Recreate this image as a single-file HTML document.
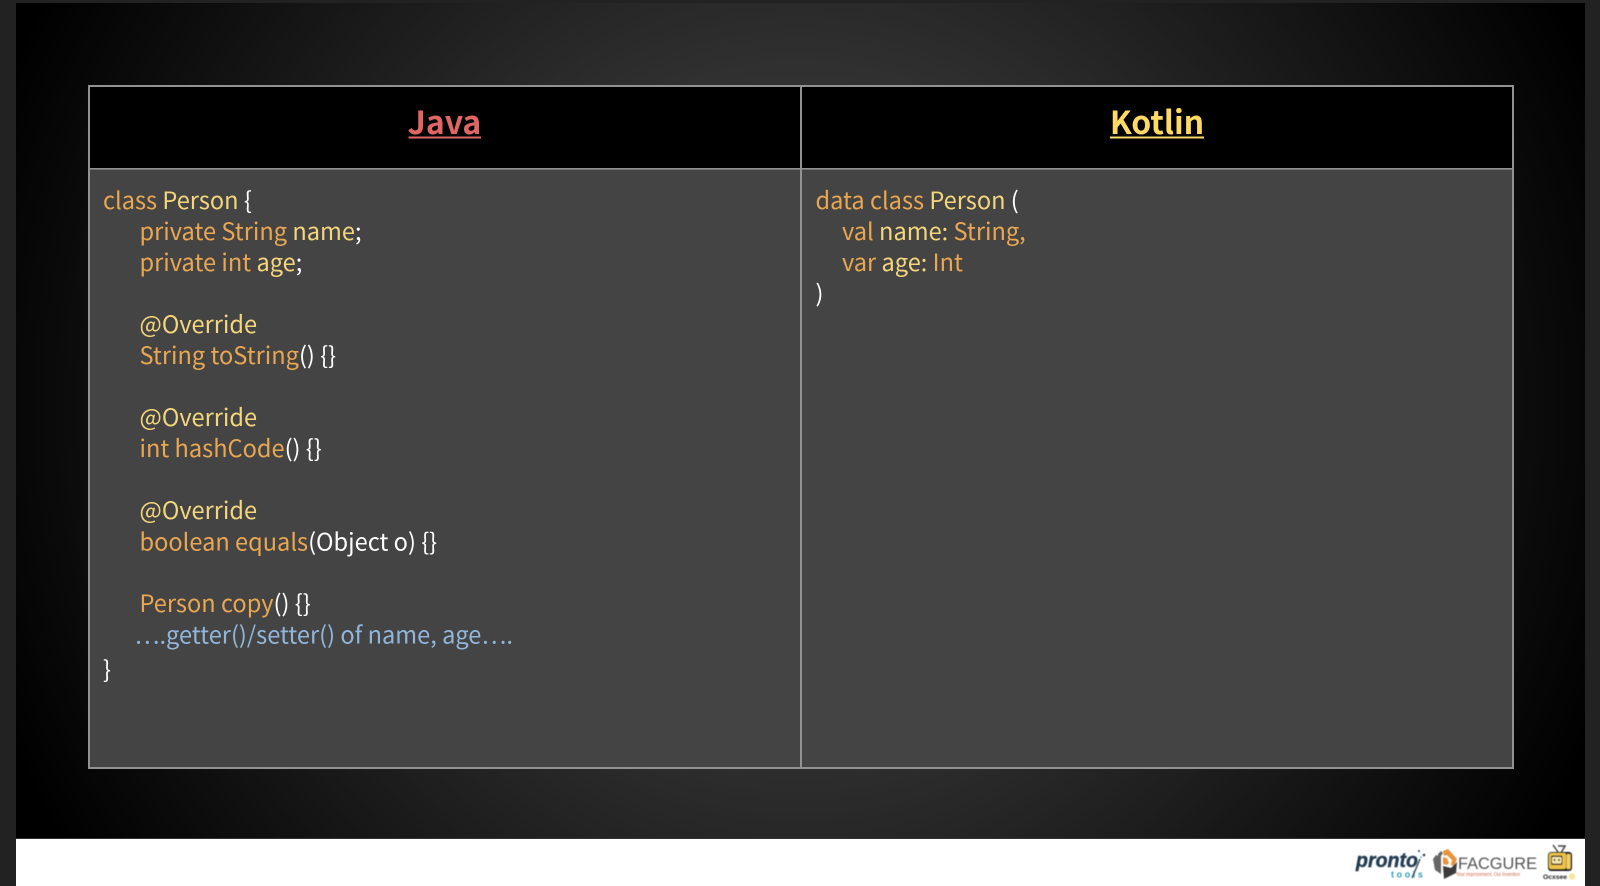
<!DOCTYPE html>
<html><head><meta charset="utf-8"><title>Java vs Kotlin</title>
<style>
html,body{margin:0;padding:0;background:#222;width:1600px;height:886px;overflow:hidden}
svg{display:block;position:absolute;left:0;top:0}
.c{font-family:"Noto Sans CJK JP","Liberation Sans",sans-serif;font-size:23.6px;fill:#fff}
.h{font-family:"Noto Sans CJK JP","Liberation Sans",sans-serif;font-size:32px;font-weight:700;text-anchor:middle}
.o{fill:#eaa752}.y{fill:#f4d67c}.w{fill:#fff}.b{fill:#92b6da}
</style></head><body>
<svg width="1600" height="886" viewBox="0 0 1600 886" xmlns="http://www.w3.org/2000/svg">
<defs>
<radialGradient id="bg" gradientUnits="userSpaceOnUse" cx="800" cy="405" r="860">
<stop offset="0" stop-color="#4f4f4f"/><stop offset="1" stop-color="#000"/>
</radialGradient>
<filter id="s" x="-5%" y="-5%" width="110%" height="110%"><feGaussianBlur stdDeviation="0.4"/></filter>
</defs>
<rect width="1600" height="886" fill="#222"/>
<rect x="16" y="3" width="1569" height="836" fill="url(#bg)"/>
<rect x="16" y="839" width="1569" height="47" fill="#fff"/>
<rect x="16" y="838" width="1569" height="1" fill="#333"/>

<rect x="89" y="86" width="1424" height="82" fill="#000"/>
<rect x="89" y="169" width="1424" height="599" fill="#444"/>
<g fill="#929292">
<rect x="88" y="85" width="1426" height="2"/>
<rect x="88" y="168" width="1426" height="1.6"/>
<rect x="88" y="767" width="1426" height="2"/>
<rect x="88" y="85" width="2" height="684"/>
<rect x="800" y="85" width="2" height="684"/>
<rect x="1512" y="85" width="2" height="684"/>
</g>

<text class="h" x="444.5" y="134" fill="#e06666">Java</text>
<rect x="408.5" y="136.5" width="72.5" height="2" fill="#e06666"/>
<text class="h" x="1157" y="134" fill="#ffd966">Kotlin</text>
<rect x="1110" y="136.5" width="94" height="2" fill="#ffd966"/>

<text class="c" x="103" y="209" xml:space="preserve"><tspan class="o">class </tspan><tspan class="y">Person </tspan><tspan class="w">{</tspan></text>
<text class="c" x="139.5" y="240" xml:space="preserve"><tspan class="o">private String </tspan><tspan class="y">name</tspan><tspan class="w">;</tspan></text>
<text class="c" x="139.5" y="271" xml:space="preserve"><tspan class="o">private int </tspan><tspan class="y">age</tspan><tspan class="w">;</tspan></text>
<text class="c y" x="139.5" y="333">@Override</text>
<text class="c" x="139.5" y="364" xml:space="preserve"><tspan class="o">String toString</tspan><tspan class="w">() {}</tspan></text>
<text class="c y" x="139.5" y="426">@Override</text>
<text class="c" x="139.5" y="457" xml:space="preserve"><tspan class="o">int hashCode</tspan><tspan class="w">() {}</tspan></text>
<text class="c y" x="139.5" y="519">@Override</text>
<text class="c" x="139.5" y="550.5" xml:space="preserve"><tspan class="o">boolean equals</tspan><tspan class="w">(Object o) {}</tspan></text>
<text class="c" x="139.5" y="612" xml:space="preserve"><tspan class="o">Person copy</tspan><tspan class="w">() {}</tspan></text>
<text class="c b" x="134.5" y="643.5">….getter()/setter() of name, age….</text>
<text class="c w" x="103" y="678">}</text>

<text class="c" x="815.5" y="209" xml:space="preserve"><tspan class="o">data class </tspan><tspan class="y">Person </tspan><tspan class="w">(</tspan></text>
<text class="c" x="842" y="240" xml:space="preserve"><tspan class="o">val </tspan><tspan class="y">name: </tspan><tspan class="o">String,</tspan></text>
<text class="c" x="842" y="271" xml:space="preserve"><tspan class="o">var </tspan><tspan class="y">age: </tspan><tspan class="o">Int</tspan></text>
<text class="c w" x="815.5" y="302">)</text>

<g filter="url(#s)">
<text x="1356" y="867" font-family="Liberation Sans, sans-serif" font-size="20" font-weight="700" font-style="italic" fill="#243a50" stroke="#243a50" stroke-width=".4" textLength="62" lengthAdjust="spacingAndGlyphs">pronto</text>
<text x="1391" y="877.5" font-family="Liberation Sans, sans-serif" font-size="9" font-weight="700" fill="#2f9ab0" letter-spacing="2.6">tools</text>
<path d="M1420 859L1412 878" stroke="#243a50" stroke-width="1.3" fill="none"/>
<circle cx="1419" cy="851" r="1" fill="#243a50"/><circle cx="1424" cy="855" r="1.3" fill="#243a50"/><circle cx="1421" cy="857" r=".8" fill="#2f9ab0"/>

<path d="M1433 859l3-4 2 1v16l-3-2zM1438 854l3-3 2 2-2 3v18l-3-2z" fill="#666"/>
<path d="M1443 851l5-2 9 10-3 7-3-1 1-5-5-5-3 1z" fill="#e8913a"/>
<path d="M1443 857l4 1 2 5-2 2-4-1z" fill="#e8913a"/>
<path d="M1443 866L1451 868 1457 862 1456 873 1444 879z" fill="#3a3a3a"/>
<text x="1458" y="869" font-family="Liberation Sans, sans-serif" font-size="16.5" fill="#555" textLength="79" lengthAdjust="spacingAndGlyphs">FACGURE</text>
<text x="1456" y="876" font-family="Liberation Sans, sans-serif" font-size="5.2" fill="#d2694a" textLength="64" lengthAdjust="spacingAndGlyphs">Your Improvement, Our Invention</text>

<path d="M1553 845l5 7M1558 846h7l-4 7" stroke="#444" stroke-width="1.5" fill="none"/>
<rect x="1548" y="852" width="24" height="19" rx="3" fill="#1a1a1a"/>
<rect x="1549" y="853" width="17" height="16" rx="2" fill="#eec24a"/>
<rect x="1566.5" y="854" width="4" height="15" rx="1" fill="#f2cf63"/>
<rect x="1551" y="855.5" width="11.5" height="9.5" rx="1.5" fill="#2a2a2a"/>
<rect x="1552" y="857" width="9.5" height="6.5" rx="1" fill="#f7e9b0"/>
<circle cx="1554.5" cy="860" r="1" fill="#111"/><circle cx="1559" cy="860" r="1" fill="#111"/>
<text x="1543" y="879" font-family="Liberation Sans, sans-serif" font-size="6.4" font-weight="700" fill="#222" textLength="24" lengthAdjust="spacingAndGlyphs">Ocxsee</text>
<circle cx="1572" cy="876.5" r="3.2" fill="#f7e6a0"/>
</g>
</svg>
</body></html>
